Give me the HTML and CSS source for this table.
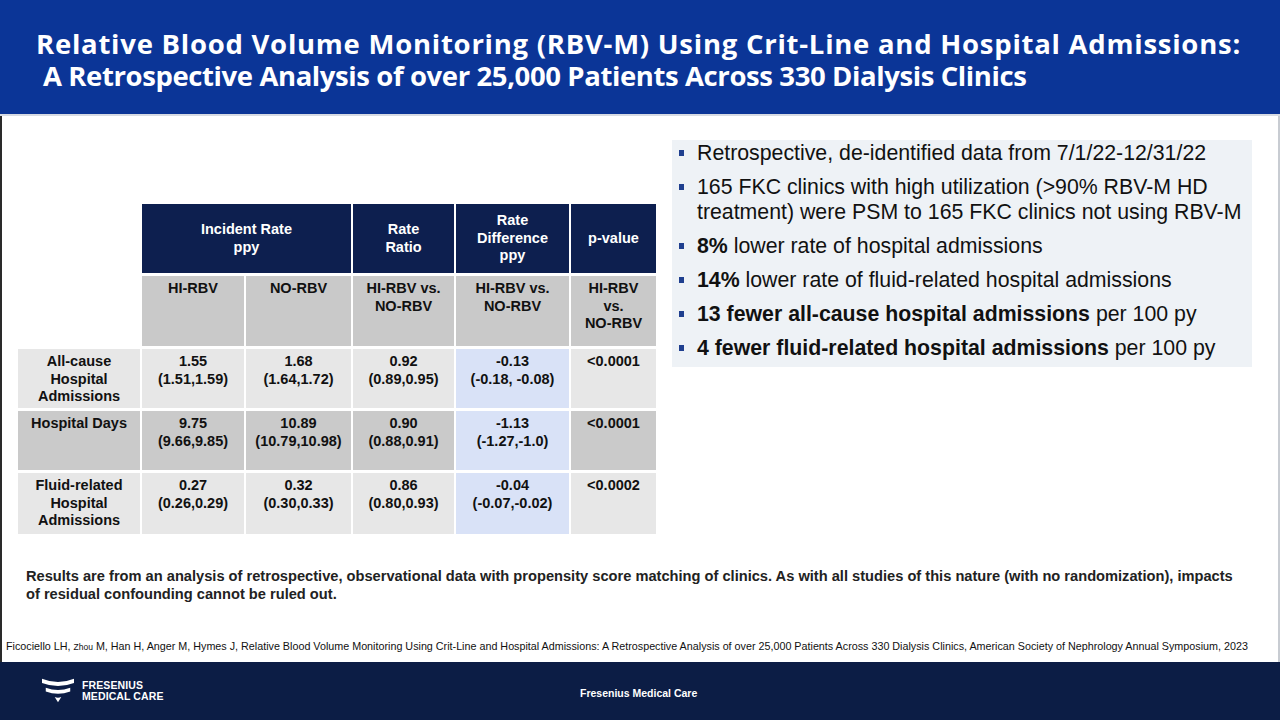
FILE: index.html
```html
<!DOCTYPE html>
<html>
<head>
<meta charset="utf-8">
<link rel="stylesheet" href="styles.css">
</head>
<body>
<div class="slide">
  <header class="title-bar">
    <h1 class="title"><span class="t1">Relative Blood Volume Monitoring (RBV-M) Using Crit-Line and Hospital Admissions:</span><span class="t2">A Retrospective Analysis of over 25,000 Patients Across 330 Dialysis Clinics</span></h1>
  </header>
  <main class="content">
    <div class="top">
      <div class="grid">
        <div class="blank"></div>
        <div class="hd span2">Incident Rate<br>ppy</div>
        <div class="hd">Rate<br>Ratio</div>
        <div class="hd">Rate<br>Difference<br>ppy</div>
        <div class="hd">p-value</div>

        <div class="blank"></div>
        <div class="sub">HI-RBV</div>
        <div class="sub">NO-RBV</div>
        <div class="sub">HI-RBV vs.<br>NO-RBV</div>
        <div class="sub">HI-RBV vs.<br>NO-RBV</div>
        <div class="sub">HI-RBV<br>vs.<br>NO-RBV</div>

        <div class="c light">All-cause<br>Hospital<br>Admissions</div>
        <div class="c light">1.55<br>(1.51,1.59)</div>
        <div class="c light">1.68<br>(1.64,1.72)</div>
        <div class="c light">0.92<br>(0.89,0.95)</div>
        <div class="c blue">-0.13<br>(-0.18, -0.08)</div>
        <div class="c light">&lt;0.0001</div>

        <div class="c dark">Hospital Days</div>
        <div class="c dark">9.75<br>(9.66,9.85)</div>
        <div class="c dark">10.89<br>(10.79,10.98)</div>
        <div class="c dark">0.90<br>(0.88,0.91)</div>
        <div class="c blue">-1.13<br>(-1.27,-1.0)</div>
        <div class="c dark">&lt;0.0001</div>

        <div class="c light">Fluid-related<br>Hospital<br>Admissions</div>
        <div class="c light">0.27<br>(0.26,0.29)</div>
        <div class="c light">0.32<br>(0.30,0.33)</div>
        <div class="c light">0.86<br>(0.80,0.93)</div>
        <div class="c blue">-0.04<br>(-0.07,-0.02)</div>
        <div class="c light">&lt;0.0002</div>
      </div>
      <ul class="points">
        <li>Retrospective, de-identified data from 7/1/22-12/31/22</li>
        <li>165 FKC clinics with high utilization (&gt;90% RBV-M HD treatment) were PSM to 165 FKC clinics not using RBV-M</li>
        <li><b>8%</b> lower rate of hospital admissions</li>
        <li><b>14%</b> lower rate of fluid-related hospital admissions</li>
        <li><b>13 fewer all-cause hospital admissions</b> per 100 py</li>
        <li><b>4 fewer fluid-related hospital admissions</b> per 100 py</li>
      </ul>
    </div>
    <p class="disclaimer">Results are from an analysis of retrospective, observational data with propensity score matching of clinics. As with all studies of this nature (with no randomization), impacts of residual confounding cannot be ruled out.</p>
    <p class="citation">Ficociello LH, <span class="small">Zhou</span> M, Han H, Anger M, Hymes J, Relative Blood Volume Monitoring Using Crit-Line and Hospital Admissions: A Retrospective Analysis of over 25,000 Patients Across 330 Dialysis Clinics, American Society of Nephrology Annual Symposium, 2023</p>
  </main>
  <footer class="footer">
    <div class="logo">
      <svg class="mark" width="32" height="26" viewBox="0 0 34 26">
        <path d="M0 0 Q17 7 34 0 L34 4.5 Q17 11 0 4.5 Z" fill="#fff"/>
        <path d="M4 9.5 Q17 14.5 30 9.5 L30 13.5 Q17 18.5 4 13.5 Z" fill="#fff"/>
        <path d="M13.5 19.5 Q17 21 20.5 19.5 L17 25 Z" fill="#fff"/>
      </svg>
      <div class="logo-text">FRESENIUS<br>MEDICAL CARE</div>
    </div>
    <div class="footer-center">Fresenius Medical Care</div>
  </footer>
</div>
</body>
</html>
```
FILE: styles.css
```css
html, body {
  margin: 0;
  padding: 0;
  background: #fff;
}
.slide {
  width: 1280px;
  height: 720px;
  display: flex;
  flex-direction: column;
  overflow: hidden;
  font-family: "Liberation Sans", Arial, sans-serif;
}
.title-bar {
  height: 114px;
  background: #0b3597;
  border-bottom: 2px solid #d7dbe3;
  padding-left: 36px;
}
.title {
  margin: 0;
  padding-top: 28px;
  font-family: "Open Sans", sans-serif;
  font-weight: 700;
  font-size: 27.5px;
  line-height: 32px;
  color: #fff;
  white-space: nowrap;
}
.title span { display: block; height: 32px; }
.title .t1 { letter-spacing: 0.75px; }
.title .t2 { padding-left: 7px; letter-spacing: -0.4px; }

.content {
  flex: 1;
  border-left: 2px solid #2a2a2a;
  border-right: 2px solid #c8ccd2;
  display: flex;
  flex-direction: column;
}
.top {
  display: flex;
  align-items: flex-start;
}
.grid {
  margin-left: 16px;
  margin-top: 88px;
  display: grid;
  grid-template-columns: 122px 102px 105px 101px 113px 85px;
  grid-template-rows: 69px 70px 59px 59px 61px;
  column-gap: 2px;
  row-gap: 3px;
  font-weight: 700;
  font-size: 14.5px;
  line-height: 17.5px;
  text-align: center;
  color: #111;
}
.grid > div { box-sizing: border-box; }
.blank { background: #fff; }
.hd {
  background: #0d1f4f;
  color: #fff;
  display: flex;
  align-items: center;
  justify-content: center;
}
.span2 { grid-column: span 2; }
.sub {
  background: #c9c9c9;
  padding-top: 4px;
}
.c { padding-top: 4px; }
.light { background: #e7e7e7; }
.dark { background: #cacaca; }
.blue { background: #d9e2f7; }

.points {
  list-style: none;
  margin: 24px 0 0 16px;
  padding: 1px 6px 6px 25px;
  width: 580px;
  box-sizing: border-box;
  background: #eef2f6;
  font-size: 21.3px;
  line-height: 25px;
  color: #111;
}
.points li {
  position: relative;
  margin-bottom: 9px;
}
.points li:last-child { margin-bottom: 0; }
.points li::before {
  content: "";
  position: absolute;
  left: -18px;
  top: 9px;
  width: 5px;
  height: 6px;
  background: #1f3f8f;
}
.disclaimer {
  margin: 33px 0 0 24px;
  font-size: 14.65px;
  font-weight: 700;
  line-height: 18px;
  color: #222;
  width: 1212px;
}
.citation {
  margin: 36px 0 0 4px;
  font-size: 10.75px;
  line-height: 14px;
  color: #111;
  white-space: nowrap;
}
.citation .small { font-size: 8.5px; }

.footer {
  height: 58px;
  background: #0c1d45;
  display: flex;
  align-items: center;
  color: #fff;
}
.logo {
  display: flex;
  align-items: center;
  margin-left: 42px;
  width: 300px;
}
.mark { display: block; }
.logo-text {
  margin-left: 8px;
  font-weight: 700;
  font-size: 10.5px;
  line-height: 11.5px;
  letter-spacing: 0.1px;
}
.footer-center {
  margin-left: 238px;
  padding-top: 4px;
  font-weight: 700;
  font-size: 10.5px;
}
```
